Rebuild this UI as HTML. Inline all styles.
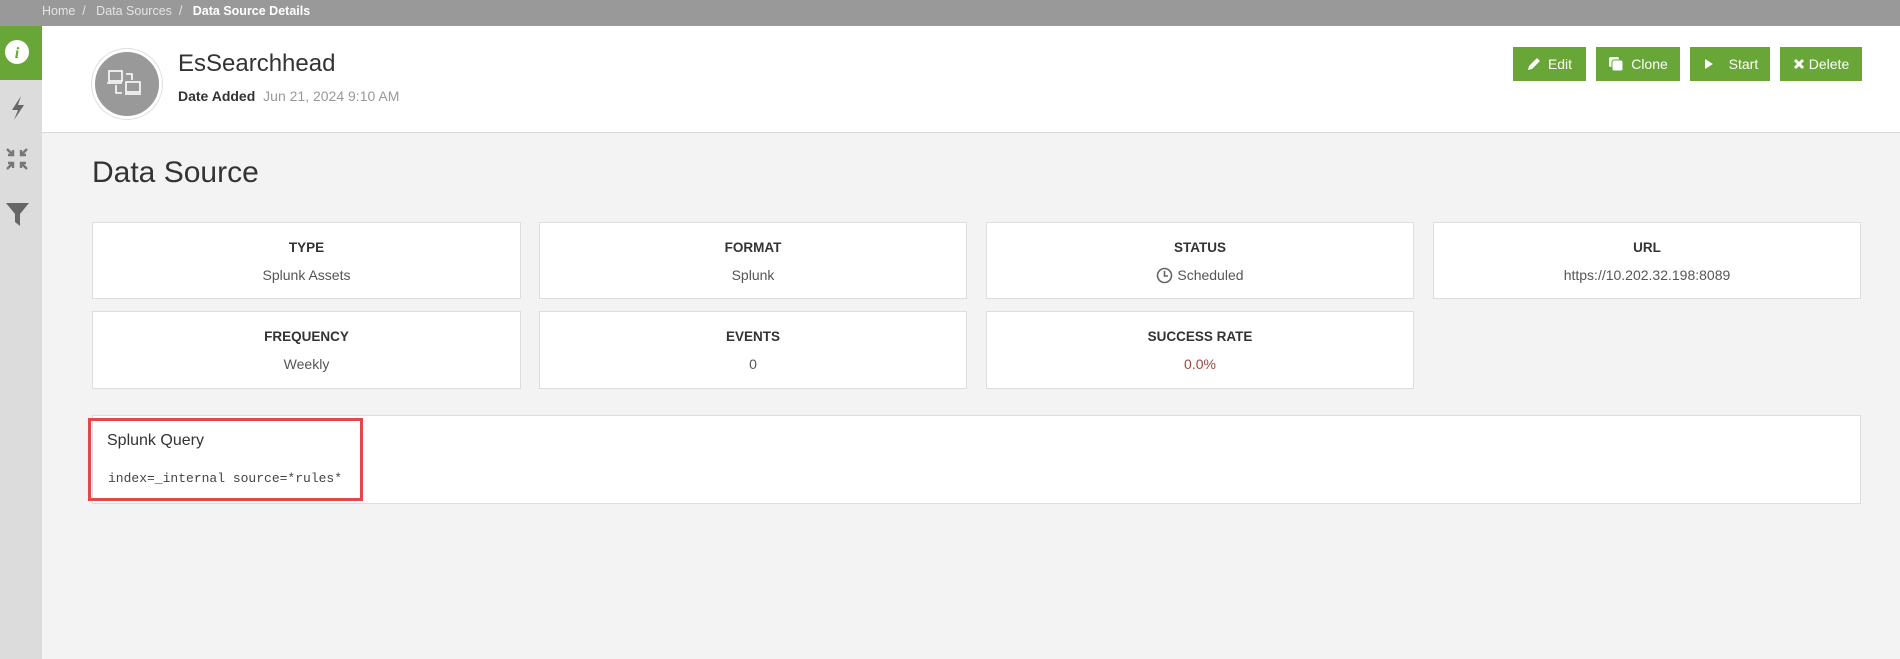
<!DOCTYPE html>
<html><head><style>
*{margin:0;padding:0;box-sizing:border-box}
body{width:1900px;height:659px;background:#f3f3f3;font-family:"Liberation Sans",sans-serif;position:relative;overflow:hidden;color:#333}
.top{position:absolute;left:0;top:0;width:1900px;height:26px;background:#999;font-size:12.5px;color:#e4e4e4;padding:4px 0 0 42px}
.top b{color:#fff;font-weight:bold}
.side{position:absolute;left:0;top:26px;width:42px;height:633px;background:#dcdcdc}
.tile{position:absolute;left:0;top:26px;width:42px;height:54px;background:#67a637}
.hdr{position:absolute;left:42px;top:26px;width:1858px;height:107px;background:#fff;border-bottom:1px solid #d8d8d8}
.av{position:absolute;left:92px;top:49px;width:70px;height:70px;border-radius:50%;background:#999;border:3px solid #fff;box-shadow:0 0 0 1px #ddd}
.title{position:absolute;left:178px;top:50px;font-size:24px;color:#333}
.date{position:absolute;left:178px;top:88px;font-size:14px}
.date b{font-weight:bold;color:#333}.date span{color:#999;margin-left:4px}
.btn{position:absolute;top:47px;height:34px;background:#67a637;color:#fff;font-size:14px;display:flex;align-items:center;justify-content:center;gap:7px}
h1{position:absolute;left:92px;top:156px;font-size:30px;font-weight:normal;color:#333}
.card{position:absolute;background:#fff;border:1px solid #ddd;text-align:center;font-size:14px}
.card .l{margin-top:17px;font-weight:bold;color:#333;font-size:13.5px}
.card .v{margin-top:12px;color:#555}
.q{position:absolute;left:92px;top:415px;width:1769px;height:89px;background:#fff;border:1px solid #ddd}
.red{position:absolute;left:88px;top:418px;width:275px;height:83px;border:3px solid #e2484b}
</style></head><body>
<div class="top">Home &nbsp;/&nbsp;&nbsp; Data Sources &nbsp;/&nbsp;&nbsp; <b>Data Source Details</b></div>
<div class="side"></div>
<div class="tile"><svg width="42" height="54"><circle cx="17" cy="26" r="12" fill="#fff"/><text x="17" y="32" text-anchor="middle" font-family="Liberation Serif" font-style="italic" font-weight="bold" font-size="16" fill="#67a637">i</text></svg></div>
<svg style="position:absolute;left:0;top:90px" width="42" height="140">
<path d="M21 6 L12 20 H18 L14 30 L24 15 H18 Z" fill="#666"/>
<g stroke="#777" stroke-width="2.4" fill="none"><path d="M7 59 L13 65 M13 60 V65 H8"/><path d="M27 59 L21 65 M21 60 V65 H26"/><path d="M7 79 L13 73 M13 78 V73 H8"/><path d="M27 79 L21 73 M21 78 V73 H26"/></g>
<path d="M6 113 H29 L20 124 V136 L15 132 V124 Z" fill="#666"/>
</svg>
<div class="hdr"></div>
<div class="av"><svg width="64" height="64" viewBox="0 0 64 64"><g fill="none" stroke="#fff" stroke-width="1.6"><rect x="14" y="19" width="13" height="10"/><path d="M12 31 H27"/><rect x="31" y="30" width="14" height="10"/><path d="M30 42 H46"/><path d="M31 22 H37 V28"/><path d="M21 33 V41 H27"/></g></svg></div>
<div class="title">EsSearchhead</div>
<div class="date"><b>Date Added</b> <span>Jun 21, 2024 9:10 AM</span></div>
<div class="btn" style="left:1513px;width:73px"><svg width="14" height="14"><path d="M1 13 L2 9 L10 1 L13 4 L5 12 Z" fill="#fff"/></svg>Edit</div>
<div class="btn" style="left:1596px;width:84px"><svg width="16" height="16"><rect x="1" y="1" width="10" height="10" rx="2" fill="#fff"/><rect x="4" y="4" width="11" height="11" rx="2" fill="#fff" stroke="#67a637"/></svg>Clone</div>
<div class="btn" style="left:1690px;width:80px"><svg width="16" height="12"><path d="M3 1 L11 6 L3 11Z" fill="#fff"/></svg>&nbsp;Start</div>
<div class="btn" style="left:1780px;width:82px;gap:4px"><svg width="12" height="12"><path d="M2 2 L10 10 M10 2 L2 10" stroke="#fff" stroke-width="3"/></svg>Delete</div>
<h1>Data Source</h1>
<div class="card" style="left:92px;top:222px;width:429px;height:77px"><div class="l">TYPE</div><div class="v">Splunk Assets</div></div>
<div class="card" style="left:539px;top:222px;width:428px;height:77px"><div class="l">FORMAT</div><div class="v">Splunk</div></div>
<div class="card" style="left:986px;top:222px;width:428px;height:77px"><div class="l">STATUS</div><div class="v"><svg width="17" height="17" style="vertical-align:-4px"><circle cx="8.5" cy="8.5" r="7" fill="none" stroke="#666" stroke-width="1.6"/><path d="M8.5 4 V9 H12" fill="none" stroke="#666" stroke-width="1.6"/></svg> Scheduled</div></div>
<div class="card" style="left:1433px;top:222px;width:428px;height:77px"><div class="l">URL</div><div class="v">https://10.202.32.198:8089</div></div>
<div class="card" style="left:92px;top:311px;width:429px;height:78px"><div class="l">FREQUENCY</div><div class="v">Weekly</div></div>
<div class="card" style="left:539px;top:311px;width:428px;height:78px"><div class="l">EVENTS</div><div class="v">0</div></div>
<div class="card" style="left:986px;top:311px;width:428px;height:78px"><div class="l">SUCCESS RATE</div><div class="v" style="color:#a0463c">0.0%</div></div>
<div class="q"></div>
<div class="red"></div>
<div style="position:absolute;left:107px;top:432px;font-size:16px;color:#333">Splunk Query</div>
<div style="position:absolute;left:108px;top:471px;font-size:13px;font-family:'Liberation Mono',monospace;color:#444">index=_internal source=*rules*</div>
</body></html>
